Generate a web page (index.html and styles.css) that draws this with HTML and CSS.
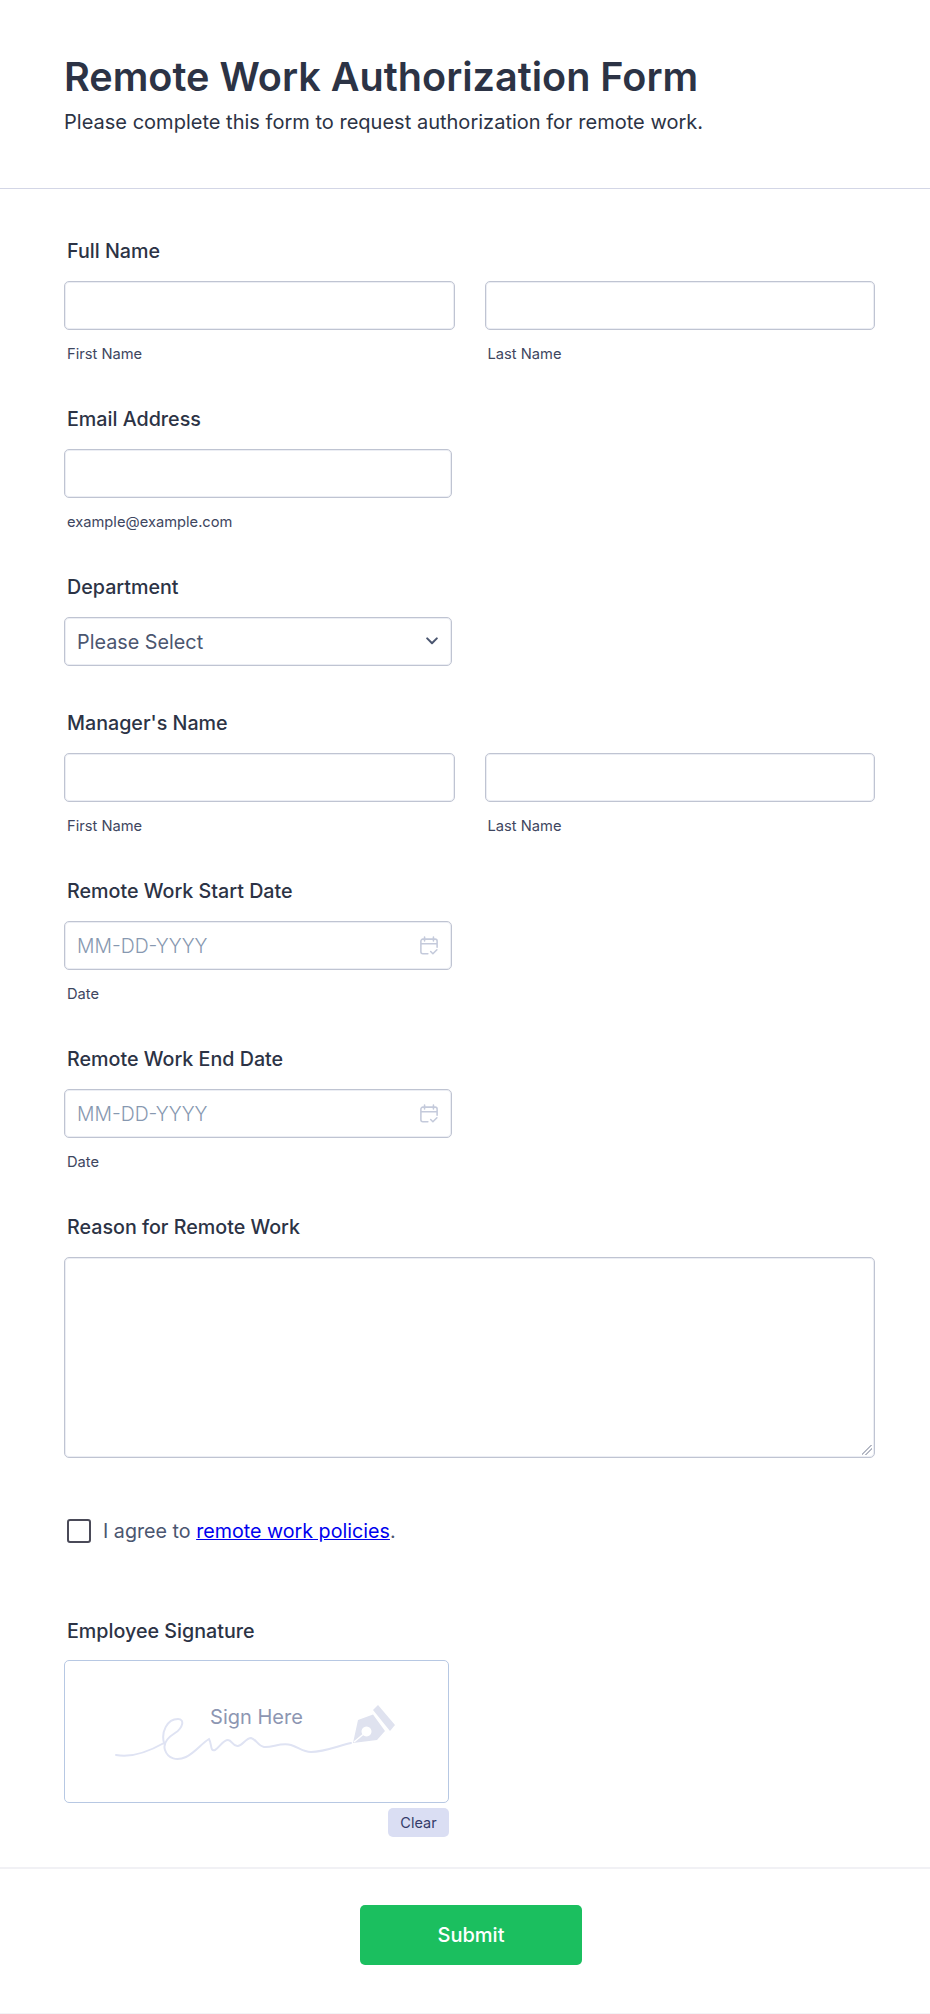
FILE: index.html
```html
<!DOCTYPE html>
<html lang="en">
<head>
<meta charset="utf-8">
<title>Remote Work Authorization Form</title>
<link rel="stylesheet" href="styles.css">
</head>
<body>
<form class="form">
  <header class="head">
    <h1 class="title">Remote Work Authorization Form</h1>
    <p class="subtitle">Please complete this form to request authorization for remote work.</p>
  </header>
  <div class="body">
    <div class="field">
      <label class="label">Full Name</label>
      <div class="two">
        <div><input class="input" type="text"><div class="sub">First Name</div></div>
        <div><input class="input" type="text"><div class="sub">Last Name</div></div>
      </div>
    </div>
    <div class="field">
      <label class="label">Email Address</label>
      <div class="narrow"><input class="input" type="text"><div class="sub">example@example.com</div></div>
    </div>
    <div class="field field-plain">
      <label class="label">Department</label>
      <div class="narrow control">
        <select class="input select"><option>Please Select</option></select>
        <svg class="chevron" viewBox="0 0 12 8" width="12" height="8"><path d="M1.200 1.400 6 6.200l4.800-4.800" fill="none" stroke="#4b5670" stroke-width="2" stroke-linecap="round" stroke-linejoin="round"/></svg>
      </div>
    </div>
    <div class="field">
      <label class="label">Manager's Name</label>
      <div class="two">
        <div><input class="input" type="text"><div class="sub">First Name</div></div>
        <div><input class="input" type="text"><div class="sub">Last Name</div></div>
      </div>
    </div>
    <div class="field">
      <label class="label">Remote Work Start Date</label>
      <div class="narrow">
        <div class="control">
          <input class="input date" type="text" placeholder="MM-DD-YYYY">
          <svg class="cal" viewBox="0 0 18 18" width="20" height="20"><path d="M8 16H3.500A1.800 1.800 0 0 1 1.700 14.200V4.600a1.800 1.800 0 0 1 1.800-1.800h11a1.800 1.800 0 0 1 1.800 1.800v5.600M1.700 7h14.600M5 1v3.400M13 1v3.400M10.500 14l2 2 3.600-3.600" fill="none" stroke="#c4cadb" stroke-width="1.400" stroke-linecap="round" stroke-linejoin="round"/></svg>
        </div>
        <div class="sub">Date</div>
      </div>
    </div>
    <div class="field">
      <label class="label">Remote Work End Date</label>
      <div class="narrow">
        <div class="control">
          <input class="input date" type="text" placeholder="MM-DD-YYYY">
          <svg class="cal" viewBox="0 0 18 18" width="20" height="20"><path d="M8 16H3.500A1.800 1.800 0 0 1 1.700 14.200V4.600a1.800 1.800 0 0 1 1.800-1.800h11a1.800 1.800 0 0 1 1.800 1.800v5.600M1.700 7h14.600M5 1v3.400M13 1v3.400M10.500 14l2 2 3.600-3.600" fill="none" stroke="#c4cadb" stroke-width="1.400" stroke-linecap="round" stroke-linejoin="round"/></svg>
        </div>
        <div class="sub">Date</div>
      </div>
    </div>
    <div class="field field-area">
      <label class="label">Reason for Remote Work</label>
      <textarea class="input area"></textarea>
    </div>
    <div class="check">
      <input class="box" type="checkbox">
      <span>I agree to <a href="#policies">remote work policies</a>.</span>
    </div>
    <div class="field field-sign">
      <label class="label">Employee Signature</label>
      <div class="pad">
        <svg class="scribble" viewBox="0 0 310 110" width="310" height="110">
          <path d="M15 65C30 68 47 62 63 53C60 42 66 29 77 29C84 29 82 38 74 43C66 48 62 54 64 60C67 69 76 71 85 67C94 63 101 53 108 49C111 54 109 62 114 60C118 58 122 50 127 50C131 50 132 57 137 56C142 55 145 48 150 48C155 49 157 56 163 57C171 58 180 52 190 55C197 57 202 62 210 62C223 62 237 56 250 53" fill="none" stroke="#dfe3f3" stroke-width="2" stroke-linecap="round"/>
          <path fill-rule="evenodd" d="M252 53 257 30 272 24.500 284 41 276 50ZM265.500 36.500a5 5 0 1 0 .01 0Z" fill="#dfe2ef"/>
          <path d="M253 52 262 44.500" stroke="#fff" stroke-width="1.400"/>
          <path d="M272 20 277 15 294 35 289 41Z" fill="#dfe2ef"/>
        </svg>
        <span class="sign-here">Sign Here</span>
      </div>
      <button class="clear" type="button">Clear</button>
    </div>
  </div>
  <footer class="foot">
    <button class="submit" type="button">Submit</button>
  </footer>
</form>
</body>
</html>
```
FILE: styles.css
```css
* { box-sizing: border-box; }
html, body { margin: 0; padding: 0; background: #fff; }
body { font-family: Inter, "Liberation Sans", sans-serif; color: #2c3345; }
.form { display: flex; flex-direction: column; height: 2014px; }
.head { height: 189px; padding: 52px 64px 0; border-bottom: 1px solid #d3d6e6; }
.title { margin: 0; font-size: 39.6px; line-height: 50px; font-weight: 600; color: #2c3345; }
.subtitle { margin: 6px 0 0; font-size: 20.05px; line-height: 28px; color: #2c3345; }
.body { padding: 48px 55px 0 64px; flex: 1; }
.field { margin-bottom: 41px; }
.field-plain { margin-bottom: 43px; }
.label { display: block; padding-left: 3px; margin-bottom: 16px; font-size: 19.7px; line-height: 28px; font-weight: 500; color: #2c3345; }
.two { display: grid; grid-template-columns: 390.5px 390.5px; column-gap: 30px; }
.narrow { width: 388px; }
.control { position: relative; }
.input { display: block; width: 100%; height: 49px; padding: 0 12px; border: 1px solid #bfc4d2; border-radius: 5px; background: #fff; font-family: Inter, "Liberation Sans", sans-serif; font-size: 19.8px; color: #4b5670; box-shadow: 0 0 0 1px #eceef4 inset; outline: none; }
.date { font-size: 19.4px; font-weight: 300; }
.input::placeholder { color: #8798b0; opacity: 1; }
.select { appearance: none; }
.chevron { position: absolute; right: 14px; top: 20px; pointer-events: none; }
.cal { position: absolute; right: 13px; top: 15px; pointer-events: none; }
.sub { padding-left: 3px; margin-top: 14px; font-size: 14.7px; line-height: 20px; color: #3e4660; }
.area { height: 201px; padding: 10px 12px; }
.area::-webkit-resizer { background: linear-gradient(135deg, transparent 42%, #b5b9c5 42%, #b5b9c5 52%, transparent 52%, transparent 62%, #b5b9c5 62%, #b5b9c5 72%, transparent 72%) center / 10px 10px no-repeat; }
.field-area { margin-bottom: 61px; }
.check { display: flex; align-items: center; gap: 12px; padding-left: 3px; height: 24px; font-size: 19.7px; color: #4b5670; }
.check a { color: #0000ee; }
.box { appearance: none; margin: 0; width: 24px; height: 24px; border: 2px solid #4a4a58; border-radius: 3px; background: #fff; }
.field-sign { margin: 74px 0 0; }
.field-sign .label { margin-bottom: 15px; }
.pad { position: relative; width: 385px; height: 143px; padding: 29px 0 0 36px; border: 1px solid #b7c8e3; border-radius: 5px; }
.scribble { display: block; }
.sign-here { position: absolute; left: 0; right: 0; top: 42px; text-align: center; font-size: 20px; line-height: 28px; color: #8d96b2; }
.clear { display: block; width: 61px; height: 29px; margin: 5px 0 0 324px; padding: 0; border: 0; border-radius: 5px; background: #dadef3; font-family: Inter, "Liberation Sans", sans-serif; font-size: 14.5px; color: #343c6a; }
.foot { display: flex; justify-content: center; height: 147px; padding: 36px 0 0 12px; border-top: 2px solid #f1f1f5; border-bottom: 1px solid #f3f3f6; }
.submit { width: 222px; height: 60px; border: 0; border-radius: 5px; background: #1bbf5f; color: #fff; font-family: Inter, "Liberation Sans", sans-serif; font-size: 20px; font-weight: 500; }
```
